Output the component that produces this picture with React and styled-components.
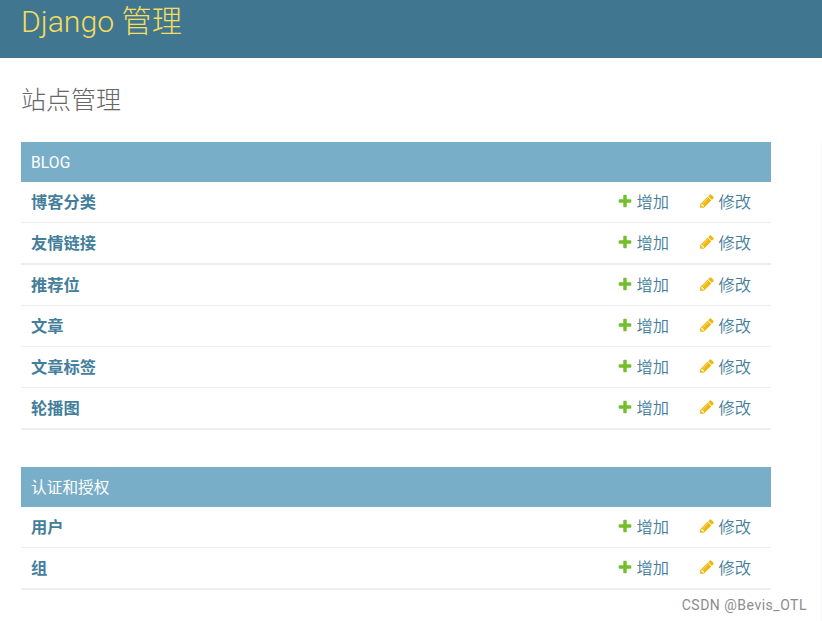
import React from "react";
import styled, { createGlobalStyle } from "styled-components";

const groups = [
  {
    name: "BLOG",
    models: [
      { name: "博客分类" },
      { name: "友情链接", thick: true },
      { name: "推荐位" },
      { name: "文章" },
      { name: "文章标签" },
      { name: "轮播图", thick: true },
    ],
  },
  {
    name: "认证和授权",
    models: [{ name: "用户" }, { name: "组", thick: true }],
  },
];

const AddIcon = () => (
  <Icon viewBox="0 0 1792 1792">
    <path
      fill="#70bf2b"
      d="M1600 796v192q0 40-28 68t-68 28h-416v416q0 40-28 68t-68 28h-192q-40 0-68-28t-28-68v-416h-416q-40 0-68-28t-28-68v-192q0-40 28-68t68-28h416v-416q0-40 28-68t68-28h192q40 0 68 28t28 68v416h416q40 0 68 28t28 68z"
    />
  </Icon>
);

const ChangeIcon = () => (
  <Icon viewBox="0 0 1792 1792">
    <path
      fill="#efb80b"
      d="M491 1536l91-91-235-235-91 91v107h128v128h107zm523-928q0-22-22-22-10 0-17 7l-542 542q-7 7-7 17 0 22 22 22 10 0 17-7l542-542q7-7 7-17zm-54-192l416 416-832 832h-416v-416zm683 96q0 53-37 90l-166 166-416-416 166-165q36-38 90-38 53 0 91 38l235 234q37 39 37 91z"
    />
  </Icon>
);

const App = () => {
  return (
    <>
      <GlobalStyle />
      <Page>
        <Header>
          <SiteName>Django 管理</SiteName>
        </Header>
        <Content>
          <Title>站点管理</Title>
          <Columns>
            <Main>
              {groups.map((group) => (
                <Module key={group.name}>
                  <Caption>{group.name}</Caption>
                  {group.models.map((model) => (
                    <Row key={model.name} $thick={model.thick}>
                      <ModelName>{model.name}</ModelName>
                      <Action $width={82}>
                        <AddIcon />
                        增加
                      </Action>
                      <Action $width={72}>
                        <ChangeIcon />
                        修改
                      </Action>
                    </Row>
                  ))}
                </Module>
              ))}
            </Main>
            <Sidebar />
          </Columns>
        </Content>
        <Watermark>CSDN @Bevis_OTL</Watermark>
      </Page>
    </>
  );
};

const GlobalStyle = createGlobalStyle`
  body {
    margin: 0;
    background: #fff;
    font-family: Roboto, "Noto Sans CJK SC", sans-serif;
    overflow: hidden;
  }
`;

const Page = styled.div`
  position: relative;
  width: 822px;
  height: 621px;
  overflow: hidden;
`;

const Header = styled.header`
  height: 58px;
  padding-left: 21px;
  box-sizing: border-box;
  background: #417690;
`;

const SiteName = styled.h1`
  margin: 0;
  font-size: 30.2px;
  font-weight: 300;
  line-height: 44px;
  color: #f5dd5d;
`;

const Content = styled.div`
  padding: 27px 0 0 21px;
`;

const Title = styled.h2`
  margin: 0 0 25px;
  font-size: 25px;
  font-weight: 300;
  line-height: 32px;
  color: #666;
`;

const Columns = styled.div`
  display: flex;
  justify-content: space-between;
`;

const Main = styled.div`
  width: 750px;
`;

const Sidebar = styled.aside`
  width: 1px;
  height: 479px;
  background: #f8f8f8;
`;

const Module = styled.section`
  margin-bottom: 37px;
`;

const Caption = styled.div`
  height: 40px;
  padding-left: 10px;
  font-size: 15.6px;
  line-height: 42px;
  letter-spacing: 0.1px;
  color: #fff;
  background: #79aec8;
`;

const Row = styled.div`
  display: flex;
  height: 40px;
  padding-left: 10px;
  font-size: 16.25px;
  line-height: 42px;
  color: #447e9b;
  border-bottom: ${({ $thick }) => ($thick ? 2 : 1)}px solid #eee;
`;

const ModelName = styled.span`
  flex: 1;
  font-weight: 700;
`;

const Action = styled.span`
  display: flex;
  align-items: flex-start;
  gap: 3.5px;
  width: ${({ $width }) => $width}px;
  font-weight: 350;
  white-space: nowrap;
`;

const Icon = styled.svg`
  width: 16px;
  height: 16px;
  margin-top: 11px;
  flex: none;
`;

const Watermark = styled.div`
  position: absolute;
  right: 15px;
  bottom: 7px;
  font-size: 14px;
  line-height: 18px;
  letter-spacing: 0.5px;
  color: #8c8c8c;
`;

export default App;
